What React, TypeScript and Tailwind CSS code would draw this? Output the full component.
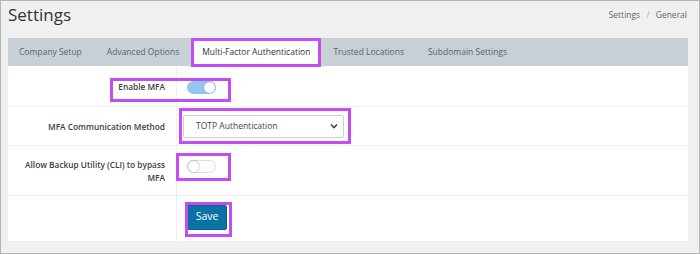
import React from "react"

const tabs = [
  "Company Setup",
  "Advanced Options",
  "Multi-Factor Authentication",
  "Trusted Locations",
  "Subdomain Settings",
]

function Toggle({ on }: { on: boolean }) {
  return on ? (
    <div className="flex h-[13px] w-[29px] items-center justify-end rounded-full bg-[#93c5f1] px-[1px]">
      <div className="h-[11px] w-[11px] rounded-full bg-white shadow-[0_0_1px_rgba(0,0,0,0.4)]" />
    </div>
  ) : (
    <div className="flex h-[13px] w-[29px] items-center justify-start rounded-full border border-[#dcdcdc] bg-white">
      <div className="h-[11px] w-[11px] rounded-full bg-white shadow-[0_0_2px_rgba(0,0,0,0.45)]" />
    </div>
  )
}

function Row({
  label,
  height,
  last,
  children,
}: {
  label: React.ReactNode
  height: string
  last?: boolean
  children?: React.ReactNode
}) {
  return (
    <div className={`flex ${height} ${last ? "" : "border-b border-[#efefef]"}`}>
      <div className="flex w-[169px] items-center justify-end border-r border-[#efefef] pr-[11px] text-right text-[8.3px] font-semibold leading-[13px] text-[#3d3d3d]">
        {label}
      </div>
      <div className="flex flex-1 items-center">{children}</div>
    </div>
  )
}

export default function App() {
  return (
    <div
      className="relative h-[254px] w-[700px] border border-[#b5b5b5] bg-[#f0f0f0] pl-[7px] pr-[11px]"
      style={{ fontFamily: '"Open Sans", "Liberation Sans", sans-serif' }}
    >
      {/* Header */}
      <div className="flex h-[37px] items-start justify-between">
        <h1 className="mt-[5px] text-[17px] leading-[17px] text-[#333]">Settings</h1>
        <div className="mt-[8px] mr-[1px] text-[8.5px] leading-[12px] text-[#666]">
          Settings <span className="mx-[4px] text-[#b0b0b0]">/</span> General
        </div>
      </div>

      {/* Tabs */}
      <div className="flex h-[28px] items-stretch bg-[#c6d0d5]">
        {tabs.map((t, i) =>
          i === 2 ? (
            <div
              key={t}
              className="mb-[-1px] flex items-center border-[3px] border-[#c54cf5] bg-white px-[8px] text-[8.5px] text-[#333]"
            >
              {t}
            </div>
          ) : (
            <div
              key={t}
              className={`flex items-center text-[8.5px] text-[#5f6468] ${
                i === 0 ? "pl-[11px] pr-[13px]" : "px-[12px]"
              }`}
            >
              {t}
            </div>
          )
        )}
      </div>

      {/* Form */}
      <div className="bg-white">
        <Row label="Enable MFA" height="h-[41px]">
          <div className="ml-[10px] pt-[2px]">
            <Toggle on />
          </div>
        </Row>
        <Row label="MFA Communication Method" height="h-[39px]">
          <div className="ml-[6px] flex h-[23px] w-[161px] items-center justify-between rounded-[2px] border border-[#cfcfcf] pl-[12px] pr-[5px] text-[8.5px] text-[#444]">
            <span>TOTP Authentication</span>
            <svg width="8" height="6" viewBox="0 0 8 6" fill="none">
              <path d="M1 1.5 L4 4.5 L7 1.5" stroke="#444" strokeWidth="1.6" />
            </svg>
          </div>
        </Row>
        <Row
          label={
            <span>
              Allow Backup Utility (CLI) to bypass
              <br />
              MFA
            </span>
          }
          height="h-[50px]"
        >
          <div className="ml-[10px] mt-[-8px]">
            <Toggle on={false} />
          </div>
        </Row>
        <Row label="" height="h-[45px]" last>
          <button className="ml-[10px] mt-[-3px] h-[25px] w-[40px] rounded-[2px] border border-[#08618c] bg-[#0a72a5] text-[10.5px] text-white">
            Save
          </button>
        </Row>
      </div>

      {/* Annotation highlights */}
      <div className="pointer-events-none absolute left-[109px] top-[77px] h-[24px] w-[121px] border-[3px] border-[#c54cf5]" />
      <div className="pointer-events-none absolute left-[178px] top-[107px] h-[36px] w-[172px] border-[3px] border-[#c54cf5]" />
      <div className="pointer-events-none absolute left-[175px] top-[152px] h-[28px] w-[55px] border-[3px] border-[#c54cf5]" />
      <div className="pointer-events-none absolute left-[184px] top-[201px] h-[35px] w-[47px] border-[3px] border-[#c54cf5]" />
    </div>
  )
}
